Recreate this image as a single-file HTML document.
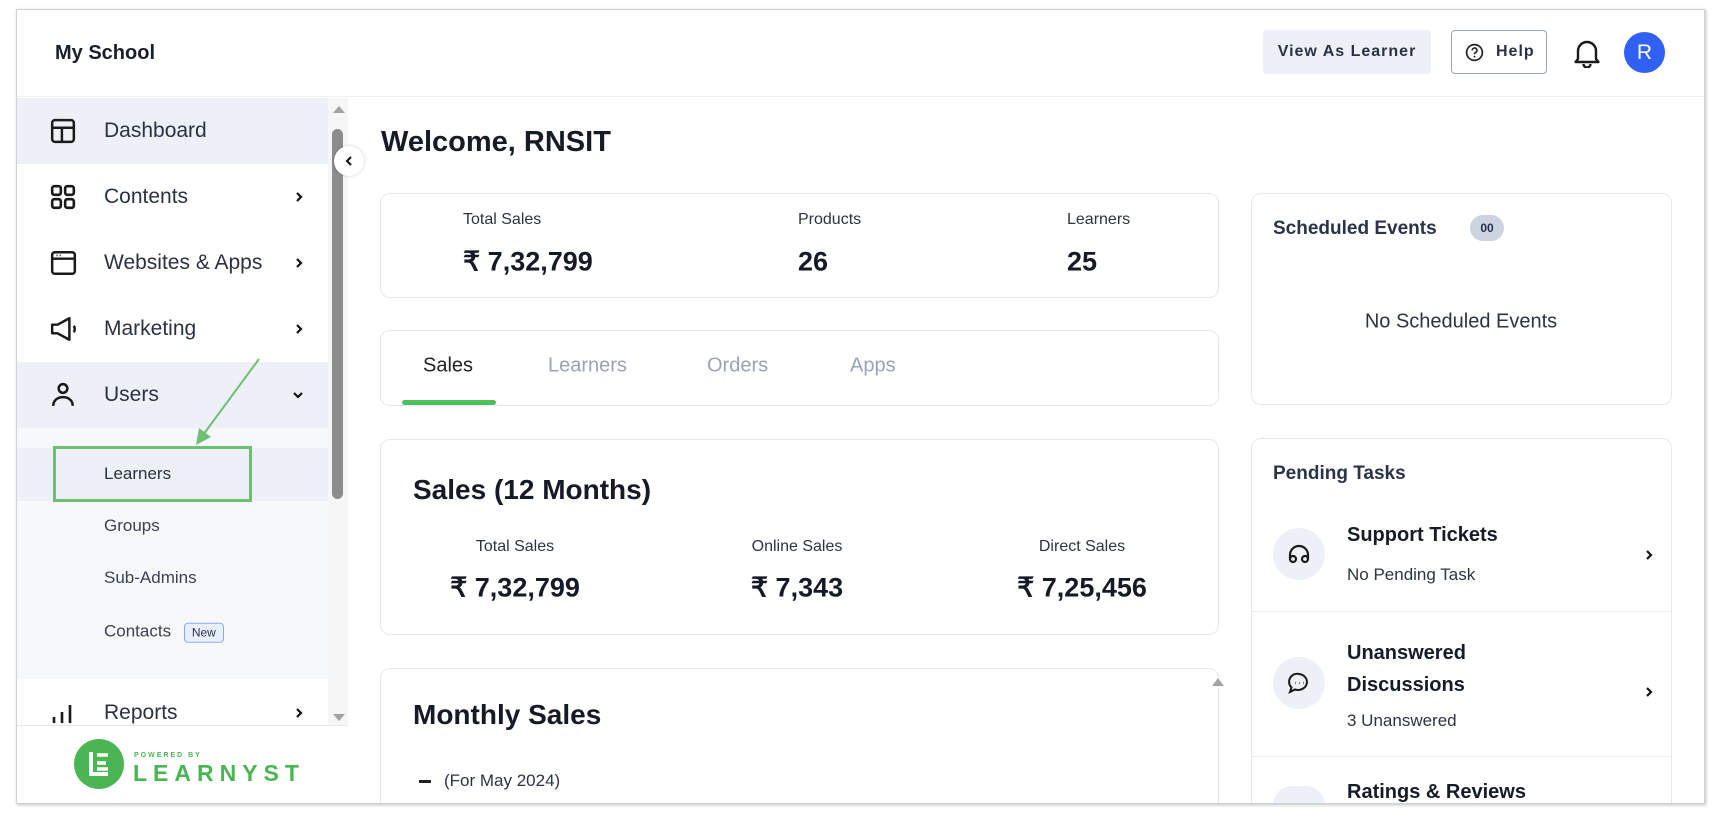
<!DOCTYPE html>
<html><head><meta charset="utf-8"><style>
*{box-sizing:border-box;margin:0;padding:0}
body{width:1720px;height:813px;background:#fff;font-family:"Liberation Sans",sans-serif;color:#1e2433;position:relative;overflow:hidden}
.a{position:absolute}
.frame{left:16px;top:9px;width:1689px;height:795px;border:1px solid #cfd2d8;box-shadow:1px 1px 3px rgba(0,0,0,.25);overflow:hidden;background:#fff}
.card{position:absolute;border:1px solid #e6e8ee;border-radius:10px;background:#fff}
.nav{position:absolute;left:0;width:311px;height:66px;font-size:21px;color:#2a3242}
.nav span{position:absolute;left:87px;top:50%;transform:translateY(-50%)}
.nav svg.i{position:absolute;left:33px;top:50%;transform:translateY(-50%)}
.chev{position:absolute;left:278px;top:50%;transform:translateY(-50%)}
.sub{position:absolute;left:87px;font-size:17px;color:#2a3242;transform:translateY(-50%)}
.lbl{position:absolute;font-size:16px;color:#2d3340;transform:translateY(-50%)}
.val{position:absolute;font-size:27px;font-weight:bold;color:#151a26;transform:translateY(-50%)}
.c{transform:translate(-50%,-50%)}
</style></head><body>
<div class="a frame">
 <div class="a" style="left:0;top:0;width:1689px;height:87px;border-bottom:1px solid #eef0f3"></div>
 <div class="a" style="left:38px;top:32px;font-size:20px;font-weight:bold;color:#1a1f2c">My School</div>
 <div class="a" style="left:1246px;top:20px;width:168px;height:44px;background:#edf0f6;border-radius:4px;font-size:16px;font-weight:bold;letter-spacing:1px;line-height:44px;text-align:center;color:#2a3242">View As Learner</div>
 <div class="a" style="left:1434px;top:20px;width:96px;height:44px;border:1px solid #9aa3b2;border-radius:4px;font-size:16px;font-weight:bold;letter-spacing:1px;line-height:42px;color:#2a3242;padding-left:44px">Help
  <svg class="a" style="left:13px;top:12px" width="19" height="19" viewBox="0 0 20 20"><circle cx="10" cy="10" r="8.3" fill="none" stroke="#222" stroke-width="1.8"/><path d="M7.6 7.8a2.5 2.5 0 1 1 3.3 2.3c-.6.3-.9.7-.9 1.4v.4" fill="none" stroke="#222" stroke-width="1.7"/><circle cx="10" cy="14.3" r="1" fill="#222"/></svg></div>
 <svg class="a" style="left:1556px;top:28px" width="28" height="30" viewBox="0 0 28 30"><path d="M5 21V13a9 9 0 0 1 18 0v8l2.5 3H2.5z" fill="none" stroke="#1a1a1a" stroke-width="2.4" stroke-linejoin="round"/><path d="M10.5 26a3.5 3.5 0 0 0 7 0" fill="none" stroke="#1a1a1a" stroke-width="2.4"/></svg>
 <div class="a" style="left:1607px;top:22px;width:41px;height:41px;border-radius:50%;background:#3160f5;color:#fff;font-size:21px;text-align:center;line-height:41px">R</div>

 <div class="a" style="left:0;top:88px;width:311px;height:627px;background:#fff"></div>
 <div class="nav" style="top:88px;background:#edf0f7"><svg class="i" width="26" height="26" viewBox="0 0 24 24" fill="none" stroke="#1a1a1a" stroke-width="2.3"><rect x="2" y="2" width="20" height="20" rx="2.5"/><path d="M2 9h20M11 9v13"/></svg><span>Dashboard</span></div>
 <div class="nav" style="top:154px"><svg class="i" width="26" height="26" viewBox="0 0 24 24" fill="none" stroke="#1a1a1a" stroke-width="2.4"><rect x="2" y="2" width="8" height="8" rx="2"/><rect x="14" y="2" width="8" height="8" rx="2"/><rect x="2" y="14" width="8" height="8" rx="2"/><rect x="14" y="14" width="8" height="8" rx="2"/></svg><span>Contents</span><svg class="chev" width="8" height="10" viewBox="0 0 8 10"><path d="M2 1l4 4-4 4" fill="none" stroke="#111" stroke-width="2.2"/></svg></div>
 <div class="nav" style="top:220px"><svg class="i" width="27" height="26" viewBox="0 0 25 24" fill="none" stroke="#1a1a1a" stroke-width="2.3"><rect x="2" y="2" width="21" height="20" rx="2.5"/><path d="M2 8h21"/><path d="M6 5h1M9 5h1" stroke-width="1.6"/></svg><span>Websites &amp; Apps</span><svg class="chev" width="8" height="10" viewBox="0 0 8 10"><path d="M2 1l4 4-4 4" fill="none" stroke="#111" stroke-width="2.2"/></svg></div>
 <div class="nav" style="top:286px"><svg class="i" width="28" height="26" viewBox="0 0 26 24" fill="none" stroke="#1a1a1a" stroke-width="2.3" stroke-linejoin="round"><path d="M2 8h5l11-6v20L7 16H2z"/><path d="M22 9c1.3 1.5 1.3 4.5 0 6"/></svg><span>Marketing</span><svg class="chev" width="8" height="10" viewBox="0 0 8 10"><path d="M2 1l4 4-4 4" fill="none" stroke="#111" stroke-width="2.2"/></svg></div>
 <div class="nav" style="top:352px;background:#edf0f7"><svg class="i" width="26" height="26" viewBox="0 0 24 24" fill="none" stroke="#1a1a1a" stroke-width="2.3"><circle cx="12" cy="6" r="4"/><path d="M3 22c0-5 4-8 9-8s9 3 9 8"/></svg><span>Users</span><svg class="chev" style="left:276px" width="10" height="8" viewBox="0 0 10 8"><path d="M1 2l4 4 4-4" fill="none" stroke="#111" stroke-width="2.2"/></svg></div>
 <div class="a" style="left:0;top:418px;width:311px;height:251px;background:#f7f8fb"></div>
 <div class="a" style="left:0;top:438px;width:311px;height:53px;background:#edf0f7"></div>
 <div class="sub" style="top:464px">Learners</div>
 <div class="sub" style="top:516px;color:#3a4252">Groups</div>
 <div class="sub" style="top:568px;color:#3a4252">Sub-Admins</div>
 <div class="sub" style="top:622px;color:#3a4252">Contacts <span style="display:inline-block;margin-left:8px;font-size:12px;border:1px solid #8ea9ef;background:#e8efff;border-radius:4px;padding:2px 7px;color:#2a3242;vertical-align:middle">New</span></div>
 <div class="a" style="left:36px;top:436px;width:199px;height:56px;border:3px solid #6cc070"></div>
 <svg class="a" style="left:160px;top:345px" width="90" height="100"><path d="M82 4L26 80" stroke="#6cc070" stroke-width="2"/><path d="M19 90l3-17 12 9z" fill="#6cc070"/></svg>
 <div class="nav" style="top:670px;height:66px"><svg class="i" width="24" height="24" viewBox="0 0 24 24" fill="none" stroke="#1a1a1a" stroke-width="2.6"><path d="M4 22v-6M12 22v-11M20 22V4"/></svg><span>Reports</span><svg class="chev" width="8" height="10" viewBox="0 0 8 10"><path d="M2 1l4 4-4 4" fill="none" stroke="#111" stroke-width="2.2"/></svg></div>
 <div class="a" style="left:311px;top:88px;width:20px;height:627px;background:#f6f6f6"></div>
 <div class="a" style="left:316px;top:96px;width:0;height:0;border-left:6px solid transparent;border-right:6px solid transparent;border-bottom:7px solid #a3a3a3"></div>
 <div class="a" style="left:316px;top:704px;width:0;height:0;border-left:6px solid transparent;border-right:6px solid transparent;border-top:7px solid #a3a3a3"></div>
 <div class="a" style="left:315px;top:119px;width:11px;height:370px;border-radius:6px;background:#8c8c8c"></div>
 <div class="a" style="left:317px;top:136px;width:30px;height:30px;border-radius:50%;background:#fff;box-shadow:0 0 3px rgba(0,0,0,.2)"><svg class="a" style="left:11px;top:10px" width="8" height="10" viewBox="0 0 8 10"><path d="M6 1L2 5l4 4" fill="none" stroke="#111" stroke-width="2"/></svg></div>
 <div class="a" style="left:0;top:715px;width:331px;height:80px;background:#fff;border-top:1px solid #e6e8ee"></div>
 <div class="a" style="left:57px;top:729px;width:50px;height:50px;border-radius:50%;background:#4cb553"></div>
 <svg class="a" style="left:72px;top:742px" width="20" height="24" viewBox="0 0 20 24"><path d="M2 0v22h17" fill="none" stroke="#fff" stroke-width="4"/><path d="M8 3h11M8 11h9M8 17h11" stroke="#fff" stroke-width="3.5"/></svg>
 <div class="a" style="left:117px;top:742px;font-size:7px;font-weight:bold;color:#4cb553;letter-spacing:2px">POWERED BY</div>
 <div class="a" style="left:116px;top:750px;font-size:23px;color:#4cb553;letter-spacing:6px;font-weight:bold">LEARNYST</div>

 <div class="a" style="left:364px;top:116px;font-size:29px;font-weight:bold;color:#161b28">Welcome, RNSIT</div>
 <div class="card" style="left:363px;top:183px;width:839px;height:105px"></div>
 <div class="lbl" style="left:446px;top:210px">Total Sales</div>
 <div class="val" style="left:446px;top:252px">₹ 7,32,799</div>
 <div class="lbl" style="left:781px;top:210px">Products</div>
 <div class="val" style="left:781px;top:252px">26</div>
 <div class="lbl" style="left:1050px;top:210px">Learners</div>
 <div class="val" style="left:1050px;top:252px">25</div>

 <div class="card" style="left:363px;top:320px;width:839px;height:76px"></div>
 <div class="lbl" style="left:406px;top:356px;font-size:20px;color:#222">Sales</div>
 <div class="lbl" style="left:531px;top:356px;font-size:20px;color:#99a3b5">Learners</div>
 <div class="lbl" style="left:690px;top:356px;font-size:20px;color:#99a3b5">Orders</div>
 <div class="lbl" style="left:833px;top:356px;font-size:20px;color:#99a3b5">Apps</div>
 <div class="a" style="left:385px;top:390px;width:94px;height:5px;border-radius:3px;background:#4cc05a"></div>

 <div class="card" style="left:363px;top:429px;width:839px;height:196px"></div>
 <div class="val" style="left:396px;top:480px;font-size:28px">Sales (12 Months)</div>
 <div class="lbl c" style="left:498px;top:537px">Total Sales</div>
 <div class="val c" style="left:498px;top:578px">₹ 7,32,799</div>
 <div class="lbl c" style="left:780px;top:537px">Online Sales</div>
 <div class="val c" style="left:780px;top:578px">₹ 7,343</div>
 <div class="lbl c" style="left:1065px;top:537px">Direct Sales</div>
 <div class="val c" style="left:1065px;top:578px">₹ 7,25,456</div>

 <div class="card" style="left:363px;top:658px;width:839px;height:137px;border-bottom:none;border-radius:10px 10px 0 0"></div>
 <div class="a" style="left:1195px;top:668px;width:0;height:0;border-left:6px solid transparent;border-right:6px solid transparent;border-bottom:8px solid #a3a3a3"></div>
 <div class="val" style="left:396px;top:705px;font-size:28px">Monthly Sales</div>
 <div class="a" style="left:402px;top:770px;width:12px;height:3px;background:#222"></div>
 <div class="lbl" style="left:427px;top:771px;font-size:17px">(For May 2024)</div>

 <div class="card" style="left:1234px;top:183px;width:421px;height:212px"></div>
 <div class="a" style="left:1256px;top:208px;font-size:19px;font-weight:bold;color:#2a3347">Scheduled Events</div>
 <div class="a" style="left:1453px;top:205px;width:34px;height:26px;border-radius:13px;background:#ccd3e0;font-size:12px;font-weight:bold;text-align:center;line-height:26px;color:#2a3347">00</div>
 <div class="lbl c" style="left:1444px;top:312px;font-size:20px">No Scheduled Events</div>

 <div class="card" style="left:1234px;top:428px;width:421px;height:367px;border-bottom:none;border-radius:10px 10px 0 0"></div>
 <div class="a" style="left:1256px;top:453px;font-size:19px;font-weight:bold;color:#2a3347">Pending Tasks</div>
 <div class="a" style="left:1256px;top:518px;width:52px;height:52px;border-radius:50%;background:#edf0f6"></div>
 <svg class="a" style="left:1270px;top:533px" width="24" height="22" viewBox="0 0 24 22" fill="none" stroke="#1a1a1a" stroke-width="2.2"><path d="M3 16v-4a9 9 0 0 1 18 0v4"/><circle cx="6" cy="16" r="3"/><circle cx="18" cy="16" r="3"/></svg>
 <div class="a" style="left:1330px;top:514px;font-size:20px;font-weight:bold;color:#161b28">Support Tickets</div>
 <div class="lbl" style="left:1330px;top:565px;font-size:17px">No Pending Task</div>
 <svg class="a" style="left:1628px;top:540px" width="8" height="10" viewBox="0 0 8 10"><path d="M2 1l4 4-4 4" fill="none" stroke="#111" stroke-width="2.2"/></svg>
 <div class="a" style="left:1235px;top:601px;width:419px;height:1px;background:#eceef2"></div>
 <div class="a" style="left:1256px;top:647px;width:52px;height:52px;border-radius:50%;background:#edf0f6"></div>
 <svg class="a" style="left:1270px;top:661px" width="24" height="24" viewBox="0 0 24 24" fill="none" stroke="#1a1a1a" stroke-width="2"><path d="M12 3a9 8 0 1 1-4 15.5L3 21l1.5-4.5A8 8 0 0 1 12 3z"/><path d="M8 12h.5M12 12h.5M16 12h.5" stroke-width="2.4"/></svg>
 <div class="a" style="left:1330px;top:627px;font-size:20px;font-weight:bold;color:#161b28;line-height:32px">Unanswered<br>Discussions</div>
 <div class="lbl" style="left:1330px;top:711px;font-size:17px">3 Unanswered</div>
 <svg class="a" style="left:1628px;top:677px" width="8" height="10" viewBox="0 0 8 10"><path d="M2 1l4 4-4 4" fill="none" stroke="#111" stroke-width="2.2"/></svg>
 <div class="a" style="left:1235px;top:746px;width:419px;height:1px;background:#eceef2"></div>
 <div class="a" style="left:1256px;top:776px;width:52px;height:19px;border-radius:26px 26px 0 0;background:#edf0f6"></div>
 <div class="a" style="left:1330px;top:771px;font-size:20px;font-weight:bold;color:#161b28">Ratings &amp; Reviews</div>
</div>
</body></html>
